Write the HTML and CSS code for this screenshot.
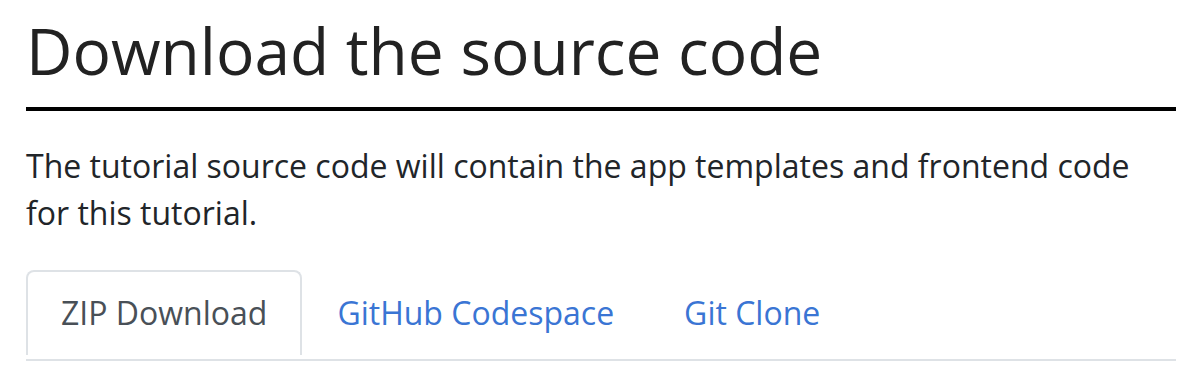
FILE: index.html
```html
<!DOCTYPE html>
<html lang="en">
<head>
    <meta charset="UTF-8">
    <meta name="viewport" content="width=device-width, initial-scale=1.0">
    <title>Download the source code</title>
    <link rel="stylesheet" href="styles.css">
</head>
<body>
    <div class="content">
        <h1 class="title">Download the source code</h1>

        <p class="intro">The tutorial source code will contain the app templates and frontend code for this tutorial.</p>

        <div class="tabs">
            <a class="tab active" href="#zip">ZIP Download</a>
            <a class="tab" href="#codespace">GitHub Codespace</a>
            <a class="tab" href="#clone">Git Clone</a>
        </div>
        <div class="tab-rule"></div>
    </div>
</body>
</html>
```

FILE: styles.css
```css
body {
    margin: 0;
    padding: 0 18px 0 26px;
    font-family: "Open Sans", "Noto Sans", sans-serif;
    color: #212529;
    background: #fff;
}
.content {
    max-width: 1150px;
}
.title {
    margin: 0;
    padding: 13px 0 17px;
    font-size: 64px;
    font-weight: 400;
    line-height: 1.2;
    color: #222;
    border-bottom: 4px solid #000;
}
.intro {
    margin: 31px 0 0;
    font-size: 32px;
    line-height: 47px;
}
.tabs {
    display: flex;
    margin-top: 34px;
}
.tab {
    display: block;
    padding: 17px 33px 18px;
    font-size: 32px;
    line-height: 1.5;
    color: #3a75d4;
    text-decoration: none;
    border: 2px solid transparent;
    border-bottom: none;
    border-radius: 8px 8px 0 0;
}
.tab.active {
    color: #495057;
    border-color: #dee2e6;
}
.tab-rule {
    margin-top: 4px;
    height: 2px;
    background: #dee2e6;
}
```
